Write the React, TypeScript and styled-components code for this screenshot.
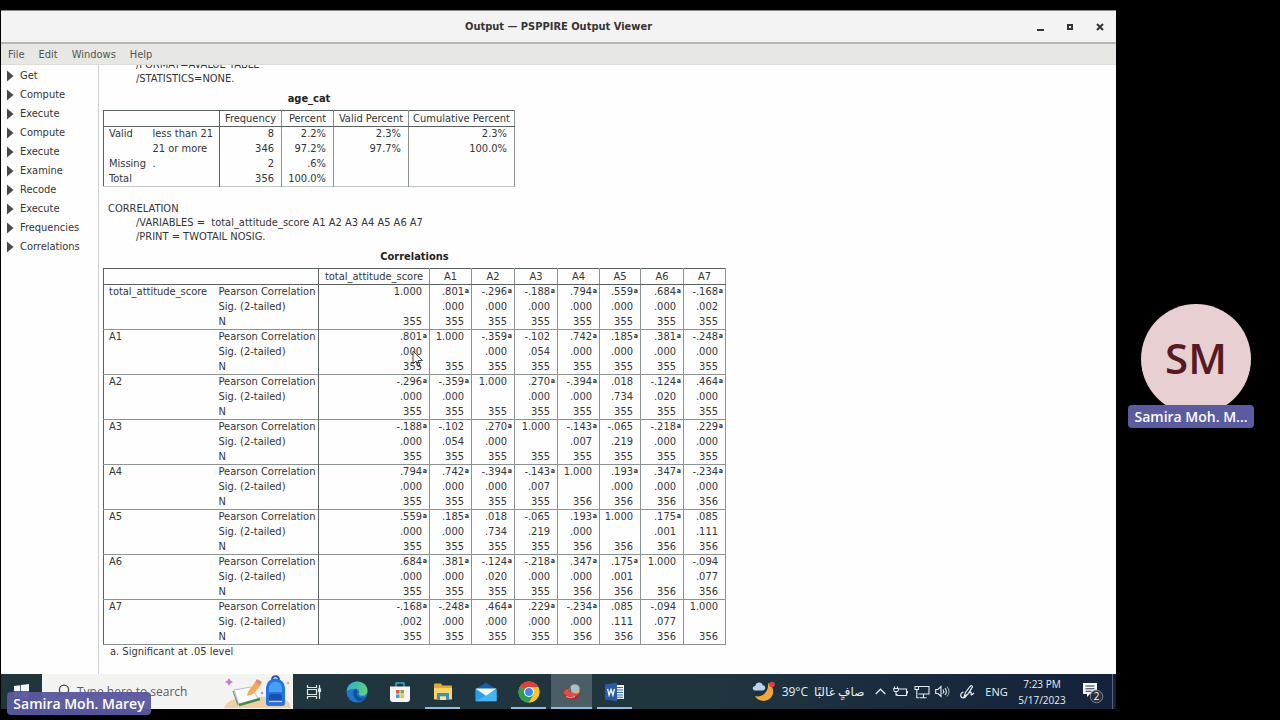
import React from "react";
import styled, { createGlobalStyle } from "styled-components";

const uiFont = '"DejaVu Sans Condensed", "DejaVu Sans", sans-serif';
const winFont = '"Open Sans", "DejaVu Sans", sans-serif';
const ink = "#353535";
const rule = "#5a5f60";
const softRule = "#8d9293";

const GlobalStyle = createGlobalStyle`
  *, *::before, *::after { box-sizing: border-box; }
  body { margin: 0; background: #000; }
  button, input { font: inherit; color: inherit; }
`;

const Meeting = styled.div`
  display: flex;
  min-height: 100vh;
  position: relative;
  background: #000;
  font-family: ${uiFont};
  font-size: 11px;
  color: ${ink};
`;

const Share = styled.main`
  flex: 1;
  min-width: 0;
  display: flex;
  flex-direction: column;
  padding: 10px 0 11px 1px;
`;

const TitleBar = styled.header`
  display: grid;
  grid-template-columns: 1fr auto 1fr;
  align-items: center;
  height: 34px;
  background: #f3f3f3;
  border-top: 1px solid #8a8886;
  border-bottom: 2px solid #b6b6b3;
`;

const Title = styled.h1`
  grid-column: 2;
  margin: 0;
  font-size: 11px;
  line-height: 16px;
  font-weight: bold;
`;

const WindowButtons = styled.div`
  display: flex;
  justify-content: flex-end;
  gap: 10px;
  padding-right: 6px;
`;

const WindowButton = styled.button`
  display: grid;
  place-items: center;
  width: 20px;
  height: 20px;
  padding: 0;
  border: 0;
  background: none;
`;

const MenuBar = styled.nav`
  display: flex;
  gap: 14px;
  height: 21px;
  padding: 0 7px;
  background: #e7e7e4;
  border-bottom: 1px solid #dcdcd8;
`;

const MenuItem = styled.button`
  padding: 0;
  border: 0;
  background: none;
  line-height: 22px;
  color: #555;
`;

const Body = styled.div`
  flex: 1;
  display: flex;
  background: #fefefe;
`;

const Outline = styled.nav`
  width: 98px;
  flex: none;
  padding-top: 1px;
  border-right: 1px solid #cfcfcf;
`;

const OutlineItem = styled.button`
  display: flex;
  align-items: center;
  gap: 6px;
  width: 100%;
  height: 19px;
  padding: 0 6px;
  border: 0;
  background: none;
  text-align: left;
`;

const Report = styled.section`
  flex: 1;
  min-width: 0;
  padding-left: 4px;
  overflow: hidden;
`;

const Syntax = styled.pre<{ $clipped?: boolean }>`
  margin: ${(p) => (p.$clipped ? "-7px 0 0" : "15px 0 0")};
  padding-left: 5px;
  font-family: inherit;
  font-size: 11px;
  line-height: 14px;
`;

const Command = styled.span`
  display: block;
`;

const Subcommand = styled.span`
  display: block;
  padding-left: 28px;
`;

const DataTable = styled.table<{ $width: number; $open?: boolean }>`
  width: ${(p) => p.$width}px;
  margin-top: 5px;
  table-layout: fixed;
  border-collapse: collapse;
  border: 1px solid ${rule};
  ${(p) => p.$open && "border-bottom-color: #c4c7c8;"}
  line-height: 14px;
`;

const Caption = styled.caption`
  padding-bottom: 3px;
  font-weight: bold;
  line-height: 16px;
  color: #222;
`;

const HeadCell = styled.th<{ $stub?: boolean }>`
  height: 16px;
  padding: 0;
  font-weight: normal;
  white-space: nowrap;
  border-bottom: 1px solid ${rule};
  border-right: 1px solid ${(p) => (p.$stub ? rule : softRule)};
`;

const StubCell = styled.th<{ $edge?: boolean }>`
  height: 15px;
  padding: 0 0 0 5px;
  font-weight: normal;
  text-align: left;
  vertical-align: top;
  white-space: nowrap;
  ${(p) => p.$edge && `border-right: 1px solid ${rule};`}
`;

const NumberCell = styled.td`
  position: relative;
  height: 15px;
  padding: 0 7px 0 0;
  text-align: right;
  white-space: nowrap;
  border-right: 1px solid ${softRule};
`;

const Group = styled.tbody`
  border-bottom: 1px solid ${softRule};
`;

const Mark = styled.sup`
  display: inline-block;
  width: 5px;
  margin-right: -5px;
  font-size: 7px;
  font-weight: bold;
  line-height: 7px;
  vertical-align: 2px;
`;

const Footnote = styled.p`
  margin: 0;
  padding-left: 7px;
  line-height: 14px;
`;

const Pointer = styled.svg`
  position: absolute;
  right: 5px;
  top: 5px;
`;

const TaskBar = styled.footer`
  display: flex;
  height: 35px;
  background: linear-gradient(90deg, #20353c 0%, #20363e 62%, #1a2c3e 80%, #14213a 100%);
  color: #e9eef0;
  font-family: ${winFont};
`;

const StartButton = styled.button`
  display: grid;
  place-items: center;
  width: 41px;
  padding: 0;
  border: 0;
  background: none;
`;

const SearchBox = styled.label`
  display: flex;
  align-items: center;
  gap: 7px;
  width: 251px;
  padding-left: 13px;
  background: #f3f3f2;
  color: #555;
`;

const SearchInput = styled.input`
  flex: 1;
  min-width: 0;
  padding: 0;
  border: 0;
  outline: 0;
  background: none;
  font-size: 12px;
  &::placeholder { color: #5c5c5c; opacity: 1; }
`;

const Apps = styled.div`
  display: flex;
  gap: 2px;
  flex: 1;
`;

const AppButton = styled.button<{ $running?: boolean; $active?: boolean }>`
  display: grid;
  place-items: center;
  width: 41px;
  padding: 2px 0 0;
  border: 0;
  border-bottom: 2px solid transparent;
  background: ${(p) => (p.$active ? "#4b5d65" : "none")};
  ${(p) =>
    p.$running &&
    `background: linear-gradient(#8fbbe2, #8fbbe2) center bottom / ${p.$active ? "41px" : "35px"} 2px no-repeat border-box${
      p.$active ? ", #4b5d65" : ""
    };`}
`;

const Tray = styled.div`
  display: flex;
  align-items: center;
  font-size: 11px;
`;

const TrayButton = styled.button<{ $w: number }>`
  display: flex;
  align-items: center;
  justify-content: center;
  gap: 6px;
  width: ${(p) => p.$w}px;
  height: 35px;
  padding: 0;
  border: 0;
  background: none;
  white-space: nowrap;
`;

const WeatherButton = styled(TrayButton)`
  font-size: 12px;
`;

const Clock = styled.time`
  width: 62px;
  text-align: center;
  font-size: 10px;
  line-height: 16px;
`;

const DesktopEdge = styled.span`
  width: 4px;
  height: 35px;
  border-left: 1px solid #5a6678;
`;

const Participants = styled.aside`
  width: 164px;
  flex: none;
  display: flex;
  flex-direction: column;
  align-items: center;
  justify-content: center;
  padding: 12px 6px 0 2px;
`;

const Avatar = styled.div`
  display: grid;
  place-items: center;
  width: 110px;
  height: 110px;
  padding-bottom: 4px;
  border-radius: 50%;
  background: #e7cfd2;
  color: #571a20;
  font-family: ${winFont};
  font-size: 42px;
  font-weight: 600;
`;

const NameTag = styled.span`
  border-radius: 4px;
  background: #5b5c9f;
  color: #fff;
  font-family: ${winFont};
  font-weight: 600;
  font-size: 14px;
  line-height: 23px;
  text-align: center;
  white-space: nowrap;
`;

const TileTag = styled(NameTag)`
  width: 126px;
  margin: -9px 10px 0 0;
  z-index: 1;
`;

const PresenterTag = styled(NameTag)`
  position: absolute;
  left: 7px;
  bottom: 5px;
  width: 144px;
  background: rgba(91, 88, 158, 0.96);
`;

const outline = ["Get", "Compute", "Execute", "Compute", "Execute", "Examine", "Recode", "Execute", "Frequencies", "Correlations"];

const ages = [
  ["Valid", "less than 21", "8", "2.2%", "2.3%", "2.3%"],
  ["", "21 or more", "346", "97.2%", "97.7%", "100.0%"],
  ["Missing", ".", "2", ".6%", "", ""],
  ["Total", "", "356", "100.0%", "", ""],
];

const variables = ["total_attitude_score", "A1", "A2", "A3", "A4", "A5", "A6", "A7"];

const pearson = [
  ["1.000", ".801a", "-.296a", "-.188a", ".794a", ".559a", ".684a", "-.168a"],
  [".801a", "1.000", "-.359a", "-.102", ".742a", ".185a", ".381a", "-.248a"],
  ["-.296a", "-.359a", "1.000", ".270a", "-.394a", ".018", "-.124a", ".464a"],
  ["-.188a", "-.102", ".270a", "1.000", "-.143a", "-.065", "-.218a", ".229a"],
  [".794a", ".742a", "-.394a", "-.143a", "1.000", ".193a", ".347a", "-.234a"],
  [".559a", ".185a", ".018", "-.065", ".193a", "1.000", ".175a", ".085"],
  [".684a", ".381a", "-.124a", "-.218a", ".347a", ".175a", "1.000", "-.094"],
  ["-.168a", "-.248a", ".464a", ".229a", "-.234a", ".085", "-.094", "1.000"],
];

const significance = [
  ["", ".000", ".000", ".000", ".000", ".000", ".000", ".002"],
  [".000", "", ".000", ".054", ".000", ".000", ".000", ".000"],
  [".000", ".000", "", ".000", ".000", ".734", ".020", ".000"],
  [".000", ".054", ".000", "", ".007", ".219", ".000", ".000"],
  [".000", ".000", ".000", ".007", "", ".000", ".000", ".000"],
  [".000", ".000", ".734", ".219", ".000", "", ".001", ".111"],
  [".000", ".000", ".020", ".000", ".000", ".001", "", ".077"],
  [".002", ".000", ".000", ".000", ".000", ".111", ".077", ""],
];

const count = (r: number, c: number) => (r > 3 && c > 3 ? "356" : "355");

const Value = ({ text }: { text: string }) =>
  text.endsWith("a") ? (
    <>
      {text.slice(0, -1)}
      <Mark>a</Mark>
    </>
  ) : (
    <>{text}</>
  );

const Cols = ({ widths }: { widths: number[] }) => (
  <colgroup>
    {widths.map((w, i) => (
      <col key={i} width={w} />
    ))}
  </colgroup>
);

const Triangle = () => (
  <svg width="7" height="12" viewBox="0 0 7 12">
    <path d="M0 0.5 L6.5 6 L0 11.5Z" fill="#484848" />
  </svg>
);

const WindowsLogo = () => (
  <svg width="15" height="15" viewBox="0 0 15 15" fill="#f4f7f8">
    <path d="M0 2.1 6.3 1.2V7H0zM7 1.1 15 0v7H7zM0 7.7h6.3v5.9L0 12.7zM7 7.7h8V15l-8-1.1z" />
  </svg>
);

const SearchIcon = () => (
  <svg width="15" height="15" viewBox="0 0 15 15" fill="none" stroke="#444" strokeWidth="1.3">
    <circle cx="9" cy="5.7" r="4.6" />
    <path d="M5.6 9.2 1 14" />
  </svg>
);

const SchoolArt = () => (
  <svg width="70" height="33" viewBox="0 0 70 33">
    <path d="M1 33 C4 26 10 24 18 23 L52 21 C62 22 67 27 68 33Z" fill="#efcfa6" />
    <path d="M11 15 28 12l8 13-20 5z" fill="#fafafa" stroke="#b9bfc2" />
    <path d="M16 30 37 24" stroke="#3f8b57" strokeWidth="2.6" />
    <path d="m10 16 5 14" stroke="#6d9b78" strokeWidth="1.2" />
    <path d="m25 17 7-10 6 3-8 9-6 2z" fill="#f2ac55" />
    <path d="m32 7 2-3 5 3-2 3z" fill="#d98a77" />
    <path d="m6 3 1.400 2.600L10 7 7.400 8.400 6 11 4.600 8.400 2 7l2.600-1.400z" fill="#c27bdc" />
    <path d="M49 5c0-5 7-5 7 0" fill="none" stroke="#2a55ab" strokeWidth="2" />
    <path d="M43 14C43 0 62 0 62 14v14c0 2-1 3-3 3H46c-2 0-3-1-3-3z" fill="#2374dc" />
    <path d="M46 12C47 5 58 5 59 12v5H46z" fill="#4a9df4" />
    <rect x="46" y="19" width="13" height="9" rx="2" fill="#174fb6" />
    <path d="M46 26.500h13" stroke="#bfe0ff" strokeWidth="1.500" />
    <circle cx="39" cy="18" r="1.200" fill="#64a9e8" />
    <circle cx="65" cy="8" r="1.300" fill="#e5a66f" />
  </svg>
);

const TaskViewIcon = () => (
  <svg width="16" height="16" viewBox="0 0 16 16" fill="none" stroke="#dfe6e8" strokeWidth="1.200">
    <path d="M1.500 1v2.500h9V1M1.500 15v-2.500h9V15M1.500 5.500h9v5h-9zM13.500 1v14" />
    <rect x="12.500" y="5" width="2" height="2.500" fill="#fff" />
  </svg>
);

const EdgeIcon = () => (
  <svg width="22" height="22" viewBox="0 0 22 22">
    <defs>
      <linearGradient id="edgeTop" x1="0" y1="0" x2="1" y2="0.400">
        <stop offset="0" stopColor="#2aa9df" />
        <stop offset="1" stopColor="#5ed07c" />
      </linearGradient>
    </defs>
    <circle cx="11" cy="11" r="10.500" fill="#1b78c9" />
    <path d="M.6 10C1.500 4 6 .5 11.200.5 17.500.5 21.500 5 21.500 9.500c0 3.500-2.600 5.200-5.300 5.200-2 0-3.700-.8-3.200-2 .9-2.200 0-5-3.500-5C5.500 7.700 2 9 .6 10z" fill="url(#edgeTop)" />
    <path d="M9 8c-3.500 3.500-1.500 10 4 12.200 2.800-.3 5.500-2 7-4.200-4 1.500-8 .5-9-2.500-.5-1.800.2-2.300.3-3.300C11.300 9 10.500 8 9 8z" fill="#134f9e" />
  </svg>
);

const StoreIcon = () => (
  <svg width="22" height="22" viewBox="0 0 22 22">
    <path d="M7 6V2h8v4" fill="none" stroke="#39a6d6" strokeWidth="1.500" />
    <path d="M1 5.500h20V18c0 2-1 3-3 3H4c-2 0-3-1-3-3z" fill="#f6f6f6" />
    <path fill="#e5593b" d="M7 9h3.600v3.600H7z" />
    <path fill="#7fb43c" d="M11.400 9H15v3.600h-3.600z" />
    <path fill="#3c9fdd" d="M7 13.400h3.600V17H7z" />
    <path fill="#f3b733" d="M11.400 13.400H15V17h-3.600z" />
  </svg>
);

const FolderIcon = () => (
  <svg width="20" height="20" viewBox="0 0 20 20">
    <path d="M1 3c0-1 .5-1.500 1.500-1.500H8l1.500 2H18c.8 0 1 .5 1 1V17H1z" fill="#e2a63a" />
    <path d="M1 6h18v11.500H1z" fill="#fbd667" />
    <path d="M4 18v-6c0-.7.300-1 1-1h10c.7 0 1 .3 1 1v6h-3v-3.500H7V18z" fill="#3f8fc0" />
    <path d="M7 14.500h6V18H7z" fill="#f7e4a2" />
  </svg>
);

const MailIcon = () => (
  <svg width="22" height="20" viewBox="0 0 22 20">
    <path d="M.5 7 11 .8 21.500 7v12H.5z" fill="#1561ad" />
    <path d="M.5 7h21v12.200H.5z" fill="#2b9fe6" />
    <path d="M21.500 8v11.200H.5z" fill="#45b6f2" />
    <path d="M.5 6.500h21L11 13.700z" fill="#f1f7fb" />
  </svg>
);

const ChromeIcon = () => (
  <svg width="22" height="22" viewBox="0 0 22 22">
    <circle cx="11" cy="11" r="10.500" fill="#f8c52e" />
    <path d="M11 11 1.900 5.750A10.500 10.500 0 0 1 20.100 5.750z" fill="#dc4336" />
    <path d="M11 11 1.900 5.750A10.500 10.500 0 0 0 11 21.500l5-8z" fill="#2f9e51" />
    <path d="M11 6h9.200a10.500 10.500 0 0 1-9.200 15.500l4.600-8z" fill="#f8c52e" />
    <circle cx="11" cy="11" r="5" fill="#fff" />
    <circle cx="11" cy="11" r="3.900" fill="#4285f0" />
  </svg>
);

const PsppIcon = () => (
  <svg width="18" height="18" viewBox="0 0 18 18">
    <path d="M1 8.500c0-3 4-4.500 8-3.500l7.500 3.500V12c-1 3.500-5 5-8.500 4.500S1 14 1 11.500z" fill="#a92d2f" />
    <ellipse cx="8.500" cy="9.500" rx="7.600" ry="4.200" fill="#e04d49" />
    <path d="M7.500 8V3.500C9.500.5 15 .5 16.500 4.500V9c-2 2-6 2-9-1z" fill="#a9c0cb" />
    <path d="M7.500 3.500 5.500 5v3l3 1.500z" fill="#54717c" />
    <path d="m10 9 6-2.500V10z" fill="#d9b36a" />
    <path d="M3 13.500q4 2.500 9 0" fill="none" stroke="#f2b3ac" />
  </svg>
);

const WordIcon = () => (
  <svg width="20" height="20" viewBox="0 0 20 20">
    <path d="M9 3h10v14H9z" fill="#f5f8fc" />
    <path d="M12 5.500h6M12 8h6M12 10.500h6M12 13h6M12 15.200h6" stroke="#3a66ad" strokeWidth="1" />
    <path d="M0 2.500 12 .5v19L0 17.500z" fill="#2b5aa8" />
    <path d="m2.600 6.800 1.500 6.400L6 7.500l1.900 5.700 1.600-6.400" fill="none" stroke="#fff" strokeWidth="1.300" />
  </svg>
);

const WeatherIcon = () => (
  <svg width="24" height="22" viewBox="0 0 24 22">
    <path d="M16 2c6 3 7 11 2 15.500-4.500 4-12 3-15-2.500 7 2 14-4 13-13z" fill="#f2a63c" />
    <path d="M3 9.500c-3-.3-3-4.500.2-4.500C4 .5 10 .5 10.800 4.200c3.300 0 3.300 5.300 0 5.300z" fill="#b9d2ee" />
    <circle cx="20" cy="3.500" r="2.800" fill="#d6463e" />
  </svg>
);

const ChevronIcon = () => (
  <svg width="11" height="7" viewBox="0 0 11 7" fill="none" stroke="#e5eaee" strokeWidth="1.300">
    <path d="m.7 6 4.800-4.800L10.300 6" />
  </svg>
);

const BatteryIcon = () => (
  <svg width="15" height="12" viewBox="0 0 15 12" fill="none" stroke="#e5eaee" strokeWidth="1.100">
    <path d="M6 3h7.500v6.500H4V8M14.500 5v2.500M1.500.5v2M4.500.5v2M.8 2.500h4.500v2C5 6 1 6 .8 4.500zM3 6v3.500" />
  </svg>
);

const NetworkIcon = () => (
  <svg width="16" height="14" viewBox="0 0 16 14" fill="none" stroke="#e5eaee" strokeWidth="1.100">
    <path d="M5 1.500h10v7.500H4.500M9.500 9v3.500M5.500 12.800h7M1 1.500h3.500v3H1zM2.800 4.500v8.300h2" />
  </svg>
);

const VolumeIcon = () => (
  <svg width="15" height="13" viewBox="0 0 15 13" fill="none" stroke="#e5eaee" strokeWidth="1.100">
    <path d="M.7 4.500H3L6 1.500v10l-3-3H.7zM8 4.500q1.500 2 0 4M10 3q2.700 3.500 0 7" />
    <path d="M12 1.500q4 5 0 10" opacity=".6" />
  </svg>
);

const PenIcon = () => (
  <svg width="16" height="16" viewBox="0 0 16 16" fill="none" stroke="#e5eaee" strokeWidth="1.200">
    <path d="M5 13 6.500 8.500 11.500 2q1.500-1 2 .8L9 10zM4.500 8C1 9 .5 13.500 4.500 14c3 0 3-4 6-5.500 2-1 2 .5 1.500 2q.5 1 3-1.500" />
  </svg>
);

const NoticeIcon = () => (
  <svg width="22" height="24" viewBox="0 0 22 24">
    <path d="M1 3h14v11H8l-3 3v-3H1z" fill="#f2f4f6" />
    <path d="M3.500 6h9M3.500 8.700h9M3.500 11.300h6" stroke="#26344a" strokeWidth="1.100" />
    <circle cx="14.500" cy="16.500" r="6.300" fill="#2a3136" stroke="#7d868d" />
    <text x="14.500" y="20" textAnchor="middle" fontSize="10" fill="#fff" fontFamily="Open Sans">
      2
    </text>
  </svg>
);

const apps = [
  { name: "Task View", icon: <TaskViewIcon /> },
  { name: "Microsoft Edge", icon: <EdgeIcon /> },
  { name: "Microsoft Store", icon: <StoreIcon /> },
  { name: "File Explorer", icon: <FolderIcon />, running: true },
  { name: "Mail", icon: <MailIcon /> },
  { name: "Google Chrome", icon: <ChromeIcon />, running: true },
  { name: "PSPP", icon: <PsppIcon />, running: true, active: true },
  { name: "Word", icon: <WordIcon />, running: true },
];

const AgeTable = () => (
  <DataTable $width={411} $open>
    <Caption>age_cat</Caption>
    <Cols widths={[44, 72, 62, 52, 75, 106]} />
    <thead>
      <tr>
        <HeadCell colSpan={2} $stub />
        {["Frequency", "Percent", "Valid Percent", "Cumulative Percent"].map((h) => (
          <HeadCell key={h} scope="col">{h}</HeadCell>
        ))}
      </tr>
    </thead>
    <tbody>
      {ages.map(([kind, label, ...values]) => (
        <tr key={kind + label}>
          <StubCell scope="row">{kind}</StubCell>
          <StubCell scope="row" $edge>{label}</StubCell>
          {values.map((v, i) => (
            <NumberCell key={i}>{v}</NumberCell>
          ))}
        </tr>
      ))}
    </tbody>
  </DataTable>
);

const CorrelationTable = () => (
  <DataTable $width={622}>
    <Caption>Correlations</Caption>
    <Cols widths={[110, 105, 111, 42, 43, 43, 42, 41, 43, 42]} />
    <thead>
      <tr>
        <HeadCell colSpan={2} $stub />
        {variables.map((v) => (
          <HeadCell key={v} scope="col">{v}</HeadCell>
        ))}
      </tr>
    </thead>
    {variables.map((name, r) => (
      <Group key={name}>
        <tr>
          <StubCell scope="rowgroup" rowSpan={3}>{name}</StubCell>
          <StubCell scope="row" $edge>Pearson Correlation</StubCell>
          {pearson[r].map((v, c) => (
            <NumberCell key={c}><Value text={v} /></NumberCell>
          ))}
        </tr>
        <tr>
          <StubCell scope="row" $edge>Sig. (2-tailed)</StubCell>
          {significance[r].map((v, c) => (
            <NumberCell key={c}>
              {v}
              {r === 1 && c === 0 && (
                <Pointer width="12" height="18" viewBox="0 0 12 18">
                  <path d="M1 1v13l3-3 2 5.500 2-.8-2-5.200h4.500z" fill="#fff" fillOpacity=".7" stroke="#444" />
                </Pointer>
              )}
            </NumberCell>
          ))}
        </tr>
        <tr>
          <StubCell scope="row" $edge>N</StubCell>
          {variables.map((v, c) => (
            <NumberCell key={v}>{count(r, c)}</NumberCell>
          ))}
        </tr>
      </Group>
    ))}
  </DataTable>
);

export default function App() {
  return (
    <Meeting>
      <GlobalStyle />
      <Share>
        <TitleBar>
          <Title>Output — PSPPIRE Output Viewer</Title>
          <WindowButtons>
            <WindowButton aria-label="Minimize">
              <svg width="8" height="8"><path d="M1 7h7" stroke="#333" strokeWidth="2" /></svg>
            </WindowButton>
            <WindowButton aria-label="Maximize">
              <svg width="6" height="6"><path d="M1 1h4v4H1z" fill="none" stroke="#333" strokeWidth="2" /></svg>
            </WindowButton>
            <WindowButton aria-label="Close">
              <svg width="8" height="8"><path d="m1 1 6 6M7 1 1 7" stroke="#333" strokeWidth="2" /></svg>
            </WindowButton>
          </WindowButtons>
        </TitleBar>
        <MenuBar>
          {["File", "Edit", "Windows", "Help"].map((m) => (
            <MenuItem key={m}>{m}</MenuItem>
          ))}
        </MenuBar>
        <Body>
          <Outline aria-label="Output outline">
            {outline.map((item, i) => (
              <OutlineItem key={i}>
                <Triangle />
                {item}
              </OutlineItem>
            ))}
          </Outline>
          <Report>
            <Syntax $clipped>
              <Subcommand>/FORMAT=AVALUE TABLE</Subcommand>
              <Subcommand>/STATISTICS=NONE.</Subcommand>
            </Syntax>
            <AgeTable />
            <Syntax>
              <Command>CORRELATION</Command>
              <Subcommand>/VARIABLES =  total_attitude_score A1 A2 A3 A4 A5 A6 A7</Subcommand>
              <Subcommand>/PRINT = TWOTAIL NOSIG.</Subcommand>
            </Syntax>
            <CorrelationTable />
            <Footnote>a. Significant at .05 level</Footnote>
          </Report>
        </Body>
        <TaskBar>
          <StartButton aria-label="Start"><WindowsLogo /></StartButton>
          <SearchBox>
            <SearchIcon />
            <SearchInput type="search" placeholder="Type here to search" aria-label="Search" />
            <SchoolArt />
          </SearchBox>
          <Apps>
            {apps.map((a) => (
              <AppButton key={a.name} aria-label={a.name} $running={a.running} $active={a.active}>
                {a.icon}
              </AppButton>
            ))}
          </Apps>
          <Tray>
            <WeatherButton $w={124}>
              <WeatherIcon />
              <span>39°C</span>
              <span lang="ar" dir="rtl">صافٍ غالبًا</span>
            </WeatherButton>
            <TrayButton $w={20} aria-label="Show hidden icons"><ChevronIcon /></TrayButton>
            <TrayButton $w={21} aria-label="Battery"><BatteryIcon /></TrayButton>
            <TrayButton $w={21} aria-label="Network"><NetworkIcon /></TrayButton>
            <TrayButton $w={20} aria-label="Volume"><VolumeIcon /></TrayButton>
            <TrayButton $w={30} aria-label="Pen"><PenIcon /></TrayButton>
            <TrayButton $w={29}>ENG</TrayButton>
            <Clock>7:23 PM<br />5/17/2023</Clock>
            <TrayButton $w={39} aria-label="Notifications"><NoticeIcon /></TrayButton>
            <DesktopEdge />
          </Tray>
        </TaskBar>
      </Share>
      <Participants>
        <Avatar>SM</Avatar>
        <TileTag>Samira Moh. M...</TileTag>
      </Participants>
      <PresenterTag>Samira Moh. Marey</PresenterTag>
    </Meeting>
  );
}
